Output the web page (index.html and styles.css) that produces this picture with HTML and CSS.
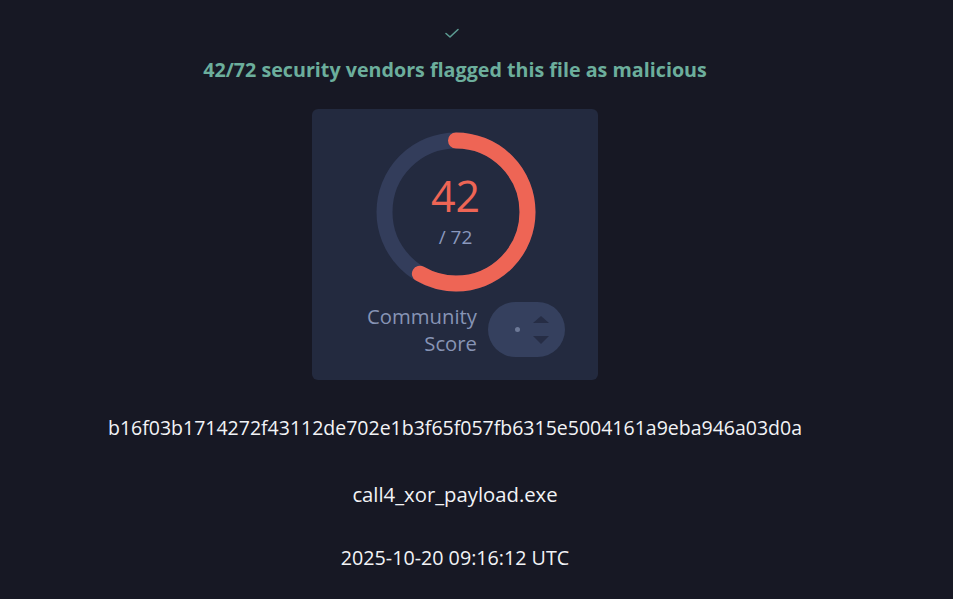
FILE: index.html
```html
<!DOCTYPE html>
<html>
<head>
<meta charset="utf-8">
<link rel="stylesheet" href="styles.css">
</head>
<body>
<main class="page">
  <svg class="check" width="16" height="14" viewBox="0 0 16 14"><path d="M2 7.5 L6 11 L14 3.5" fill="none" stroke="#5c9b92" stroke-width="1.6" stroke-linecap="round" stroke-linejoin="round"/></svg>
  <h1 class="verdict">42/72 security vendors flagged this file as malicious</h1>
  <section class="card">
    <div class="ring">
      <svg width="160" height="160" viewBox="0 0 160 160">
        <circle cx="80" cy="80" r="71.5" fill="none" stroke="#333d5b" stroke-width="16"/>
        <circle cx="80" cy="80" r="71.5" fill="none" stroke="#ee6555" stroke-width="16" stroke-linecap="round" stroke-dasharray="262.1 449.25" transform="rotate(-90 80 80)"/>
      </svg>
      <div class="ring-text">
        <div class="score">42</div>
        <div class="total">/ 72</div>
      </div>
    </div>
    <div class="community">
      <div class="community-label">Community<br>Score</div>
      <div class="pill">
        <span class="dot"></span>
        <span class="arrows">
          <svg width="18" height="32" viewBox="0 0 18 32"><path d="M9 2 L17 9 L1 9 Z" fill="#262d45"/><path d="M1 22 L17 22 L9 30 Z" fill="#262d45"/></svg>
        </span>
      </div>
    </div>
  </section>
  <div class="hash">b16f03b1714272f43112de702e1b3f65f057fb6315e5004161a9eba946a03d0a</div>
  <div class="filename">call4_xor_payload.exe</div>
  <div class="date">2025-10-20 09:16:12 UTC</div>
</main>
</body>
</html>
```
FILE: styles.css
```css
html, body {
  margin: 0;
  padding: 0;
  background: #171824;
}
body {
  font-family: "Open Sans", "Noto Sans", sans-serif;
  color: #f2f3f6;
}
.page {
  display: flex;
  flex-direction: column;
  align-items: center;
  padding-top: 26px;
  padding-right: 43px;
}
.check {
  display: block;
  margin-right: 6px;
}
.verdict {
  margin: 17px 0 0 0;
  font-size: 19.7px;
  font-weight: 700;
  color: #6cae9c;
  line-height: 26px;
}
.card {
  margin-top: 26px;
  width: 286px;
  height: 271px;
  box-sizing: border-box;
  background: #232a3f;
  border-radius: 6px;
  display: flex;
  flex-direction: column;
  align-items: center;
  padding: 23px 33px 0 33px;
}
.ring {
  position: relative;
  width: 160px;
  height: 160px;
  margin-left: 1px;
}
.ring svg {
  display: block;
}
.ring-text {
  position: absolute;
  inset: 0;
  display: flex;
  flex-direction: column;
  align-items: center;
  justify-content: center;
}
.score {
  font-size: 43px;
  line-height: 48px;
  color: #ee6555;
  margin-top: -4px;
}
.total {
  font-size: 19px;
  line-height: 24px;
  color: #8a98bd;
  margin-top: 5px;
}
.community {
  align-self: flex-end;
  display: flex;
  align-items: center;
  gap: 11px;
  margin-top: 10px;
}
.community-label {
  text-align: right;
  font-size: 20.3px;
  line-height: 27px;
  color: #8794b5;
}
.pill {
  width: 77px;
  height: 55px;
  border-radius: 28px;
  background: #35405e;
  display: flex;
  align-items: center;
  box-sizing: border-box;
  padding-left: 27px;
}
.dot {
  width: 5px;
  height: 5px;
  border-radius: 50%;
  background: #6d7997;
}
.arrows {
  margin-left: 12px;
  display: flex;
}
.arrows svg {
  display: block;
}
.hash {
  margin-top: 36px;
  font-size: 19.5px;
  line-height: 24px;
}
.filename {
  margin-top: 42px;
  font-size: 20.3px;
  line-height: 24px;
}
.date {
  margin-top: 40px;
  font-size: 19.7px;
  line-height: 24px;
}
```
